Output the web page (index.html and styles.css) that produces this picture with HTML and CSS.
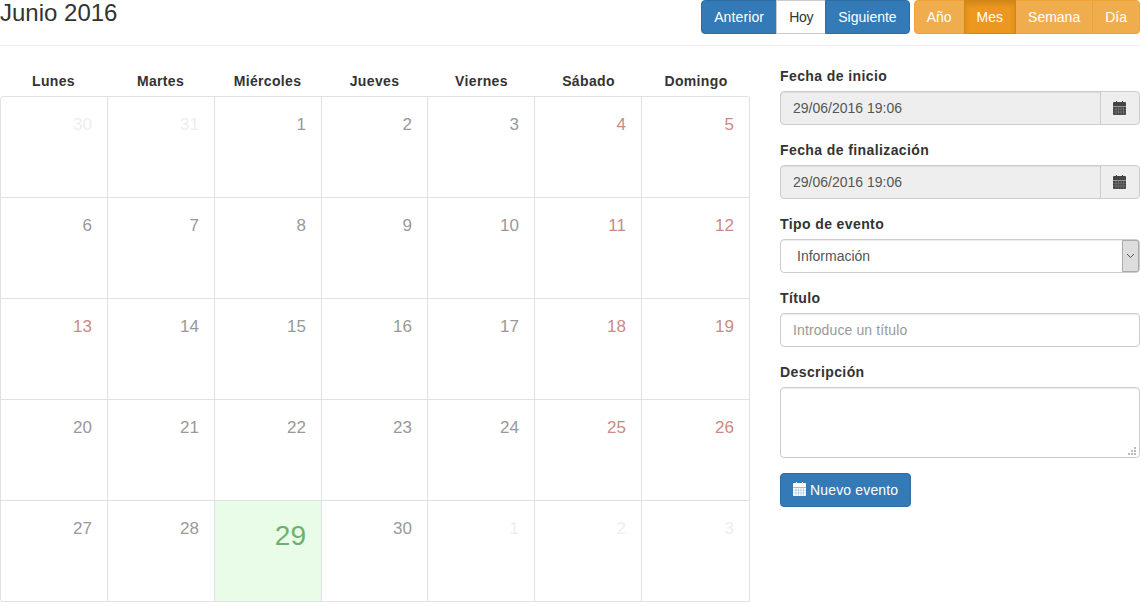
FILE: index.html
```html
<!DOCTYPE html>
<html lang="es">
<head>
<meta charset="utf-8">
<title>Calendario</title>
<link rel="stylesheet" href="styles.css">
</head>
<body>
<header class="top">
  <h3 class="title">Junio 2016</h3>
  <div class="toolbar">
    <div class="btn-group">
      <button class="btn primary wide">Anterior</button>
      <button class="btn plain">Hoy</button>
      <button class="btn primary">Siguiente</button>
    </div>
    <div class="btn-group">
      <button class="btn warning">Año</button>
      <button class="btn warning active">Mes</button>
      <button class="btn warning">Semana</button>
      <button class="btn warning">Día</button>
    </div>
  </div>
</header>
<main class="main">
  <section class="calendar">
    <div class="weekdays">
      <div>Lunes</div><div>Martes</div><div>Miércoles</div><div>Jueves</div><div>Viernes</div><div>Sábado</div><div>Domingo</div>
    </div>
    <div class="month">
      <div class="day muted">30</div><div class="day muted">31</div><div class="day">1</div><div class="day">2</div><div class="day">3</div><div class="day weekend">4</div><div class="day weekend">5</div>
      <div class="day">6</div><div class="day">7</div><div class="day">8</div><div class="day">9</div><div class="day">10</div><div class="day weekend">11</div><div class="day weekend">12</div>
      <div class="day weekend">13</div><div class="day">14</div><div class="day">15</div><div class="day">16</div><div class="day">17</div><div class="day weekend">18</div><div class="day weekend">19</div>
      <div class="day">20</div><div class="day">21</div><div class="day">22</div><div class="day">23</div><div class="day">24</div><div class="day weekend">25</div><div class="day weekend">26</div>
      <div class="day">27</div><div class="day">28</div><div class="day today">29</div><div class="day">30</div><div class="day muted">1</div><div class="day muted">2</div><div class="day muted">3</div>
    </div>
  </section>
  <form class="form">
    <div class="group">
      <label class="label">Fecha de inicio</label>
      <div class="input-group">
        <input class="control joined" value="29/06/2016 19:06" disabled>
        <span class="addon"><svg class="cal" viewBox="0 0 13 14"><path fill="currentColor" d="M1 1h2V0h1v1h5V0h1v1h2a1 1 0 0 1 1 1v3H0V2a1 1 0 0 1 1-1zM0 5.500h13V13a1 1 0 0 1-1 1H1a1 1 0 0 1-1-1z"/><path stroke="#8a8a8a" stroke-width=".5" fill="none" d="M0 8.200h13M0 11h13M3 5.500V14M5.500 5.500V14M8 5.500V14M10.500 5.500V14"/></svg></span>
      </div>
    </div>
    <div class="group">
      <label class="label">Fecha de finalización</label>
      <div class="input-group">
        <input class="control joined" value="29/06/2016 19:06" disabled>
        <span class="addon"><svg class="cal" viewBox="0 0 13 14"><path fill="currentColor" d="M1 1h2V0h1v1h5V0h1v1h2a1 1 0 0 1 1 1v3H0V2a1 1 0 0 1 1-1zM0 5.500h13V13a1 1 0 0 1-1 1H1a1 1 0 0 1-1-1z"/><path stroke="#8a8a8a" stroke-width=".5" fill="none" d="M0 8.200h13M0 11h13M3 5.500V14M5.500 5.500V14M8 5.500V14M10.500 5.500V14"/></svg></span>
      </div>
    </div>
    <div class="group">
      <label class="label">Tipo de evento</label>
      <div class="select-wrap">
        <select class="control select"><option>Información</option></select>
        <span class="arrow"><svg viewBox="0 0 9 6" class="chev"><path d="M1 1l3.500 3.500L8 1" fill="none" stroke="#555" stroke-width="1"/></svg></span>
      </div>
    </div>
    <div class="group">
      <label class="label">Título</label>
      <input class="control title-input" placeholder="Introduce un título">
    </div>
    <div class="group">
      <label class="label">Descripción</label>
      <div class="area-wrap">
        <textarea class="control area"></textarea>
        <svg class="grip" viewBox="0 0 8 8"><path fill="#bbb" d="M6 0h2v2H6zM3 3h2v2H3zM6 3h2v2H6zM0 6h2v2H0zM3 6h2v2H3zM6 6h2v2H6z"/></svg>
      </div>
    </div>
    <button type="button" class="btn primary solo"><svg class="cal cal-btn" viewBox="0 0 13 14"><path fill="currentColor" d="M1 1h2V0h1v1h5V0h1v1h2a1 1 0 0 1 1 1v3H0V2a1 1 0 0 1 1-1zM0 5.500h13V13a1 1 0 0 1-1 1H1a1 1 0 0 1-1-1z"/><path stroke="#8fb4d6" stroke-width=".5" fill="none" d="M0 8.200h13M0 11h13M3 5.500V14M5.500 5.500V14M8 5.500V14M10.500 5.500V14"/></svg> Nuevo evento</button>
  </form>
</main>
</body>
</html>
```
FILE: styles.css
```css
* { box-sizing: border-box; }
html, body { margin: 0; padding: 0; }
body {
  width: 1140px;
  height: 602px;
  overflow: hidden;
  background: #fff;
  color: #333;
  font: 14px/20px "Liberation Sans", Arial, sans-serif;
}
.top {
  display: flex;
  justify-content: space-between;
  align-items: flex-start;
  height: 46px;
  border-bottom: 1px solid #eee;
}
.title { margin: 0; font-size: 24px; font-weight: 400; line-height: 26px; }
.toolbar { display: flex; gap: 4px; }
.btn-group { display: flex; }
.btn {
  height: 34px;
  padding: 6px 12px;
  border: 1px solid transparent;
  font: inherit;
  margin: 0 0 0 -1px;
  position: relative;
}
.btn-group .btn:first-child { margin-left: 0; border-radius: 4px 0 0 4px; }
.btn-group .btn:last-child { border-radius: 0 4px 4px 0; }
.primary { background: #337ab7; border-color: #2e6da4; color: #fff; }
.plain { background: #fff; border-color: #ccc; color: #333; letter-spacing: -.25px; }
.wide { letter-spacing: .12px; }
.warning { background: #f0ad4e; border-color: #eea236; color: #fff; }
.warning.active {
  background: #ec971f;
  border-color: #d58512;
  box-shadow: inset 0 3px 5px rgba(0, 0, 0, .125);
  z-index: 1;
}
.main { display: flex; gap: 30px; }
.calendar { width: 750px; flex: none; }
.weekdays {
  display: grid;
  grid-template-columns: 107px 107px 107px 107px 107px 107px 108px;
  padding-top: 25px;
  height: 50px;
  text-align: center;
  font-weight: 700;
  letter-spacing: .35px;
}
.month {
  display: grid;
  grid-template-columns: 107px 107px 107px 106px 107px 107px 108px;
  grid-auto-rows: 101px;
  height: 506px;
  border: 1px solid #e1e1e1;
  border-width: 1px 0 0 1px;
  border-radius: 4px;
}
.day {
  padding: 16px 15px 0 0;
  border-right: 1px solid #e1e1e1;
  border-bottom: 1px solid #e1e1e1;
  text-align: right;
  font-size: 17px;
  line-height: 24px;
  color: #999;
}
.day.weekend { color: #cb8a86; }
.day.muted { color: #eee; }
.day.today {
  padding-top: 18px;
  background: #e8fce8;
  color: #6fb06f;
  font-size: 28px;
  line-height: 34px;
}
.form { width: 360px; flex: none; padding-top: 20px; }
.group { margin-bottom: 15px; }
.label { display: block; margin-bottom: 5px; font-weight: 700; letter-spacing: .4px; }
.control {
  display: block;
  width: 100%;
  height: 34px;
  padding: 6px 12px;
  border: 1px solid #ccc;
  border-radius: 4px;
  background: #fff;
  color: #555;
  font: inherit;
  box-shadow: inset 0 1px 1px rgba(0, 0, 0, .075);
}
.control::placeholder { color: #999; opacity: 1; }
.title-input::placeholder { letter-spacing: .12px; }
.control:disabled { background: #eee; opacity: 1; }
.input-group { display: flex; }
.joined { flex: 1; min-width: 0; border-radius: 4px 0 0 4px; }
.addon {
  display: flex;
  align-items: center;
  justify-content: center;
  flex: none;
  width: 40px;
  margin-left: -1px;
  padding-right: 1px;
  border: 1px solid #ccc;
  border-radius: 0 4px 4px 0;
  background: #eee;
  color: #444;
}
.cal { width: 13px; height: 14px; display: inline-block; }
.cal-btn { vertical-align: -1px; }
.select-wrap { position: relative; }
.select { appearance: none; padding-left: 16px; }
.arrow {
  position: absolute;
  top: 1px;
  right: 1px;
  bottom: 1px;
  width: 17px;
  display: flex;
  align-items: center;
  justify-content: center;
  background: #ddd;
  border: 1px solid #aaa;
  border-radius: 0 2px 2px 0;
}
.chev { width: 9px; height: 6px; }
.area-wrap { position: relative; }
.area { height: 71px; resize: none; }
.grip {
  position: absolute;
  right: 4px;
  bottom: 3px;
  width: 8px;
  height: 8px;
}
.solo { margin: 0; border-radius: 4px; letter-spacing: .15px; }
```
